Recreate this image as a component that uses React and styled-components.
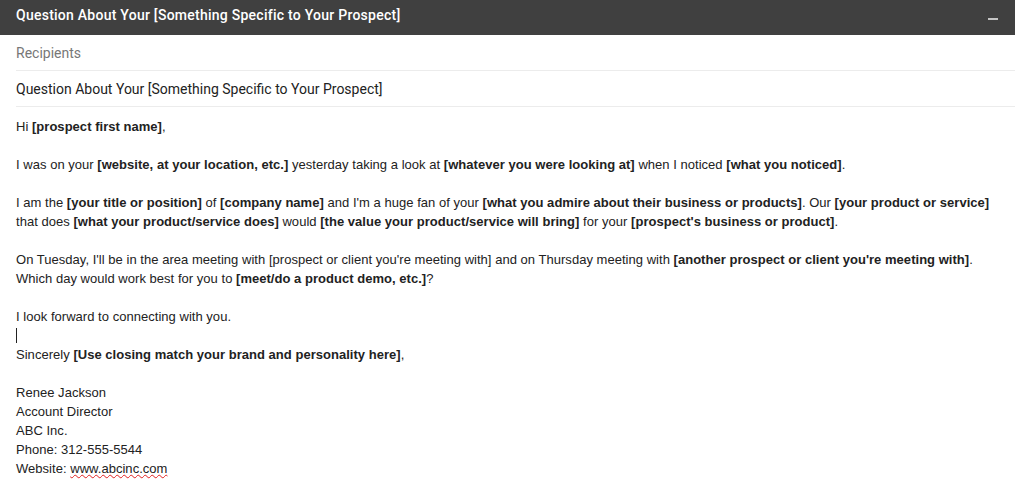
import React from 'react';
import styled, { createGlobalStyle } from 'styled-components';

const Global = createGlobalStyle`
  body {
    margin: 0;
    background: #fff;
    font-family: Roboto, "Liberation Sans", Arial, sans-serif;
  }
`;

const Window = styled.div`
  width: 1015px;
  height: 485px;
  overflow: hidden;
  display: flex;
  flex-direction: column;
`;

const TitleBar = styled.div`
  height: 35px;
  background: #404040;
  display: flex;
  align-items: center;
  justify-content: space-between;
  padding: 0 12px 0 16px;
  box-sizing: border-box;
  flex-shrink: 0;
`;

const Title = styled.div`
  color: #fff;
  font-size: 14px;
  font-weight: 500;
  letter-spacing: 0.25px;
  margin-top: -5px;
`;

const Minimize = styled.button`
  border: 0;
  padding: 0;
  background: transparent;
  width: 20px;
  height: 20px;
  display: flex;
  align-items: center;
  justify-content: center;
  margin-top: 3px;
  cursor: pointer;

  &::before {
    content: '';
    width: 10px;
    height: 2px;
    background: #c4c4c4;
  }
`;

const Field = styled.div`
  margin-left: 16px;
  height: 36px;
  border-bottom: 1px solid #ececec;
  display: flex;
  align-items: center;
  font-size: 14px;
  color: ${p => (p.$muted ? '#777' : '#222')};
  box-sizing: border-box;
  flex-shrink: 0;
`;

const Body = styled.div`
  padding: 10px 16px 0 16px;
  font-family: "Liberation Sans", Arial, sans-serif;
  font-size: 13px;
  line-height: 19px;
  letter-spacing: 0.03px;
  color: #222;

  b {
    font-weight: 700;
  }
`;

const Para = styled.p`
  margin: 0 0 19px 0;
`;

const Line = styled.div`
  min-height: 19px;
`;

const Caret = styled.span`
  display: inline-block;
  width: 1px;
  height: 15px;
  background: #222;
  vertical-align: -3px;
`;

const Misspelled = styled.span`
  text-decoration: underline wavy #e02020;
  text-decoration-thickness: 1px;
  text-underline-offset: 1px;
`;

export default function App() {
  return (
    <Window>
      <Global />
      <TitleBar>
        <Title>Question About Your [Something Specific to Your Prospect]</Title>
        <Minimize aria-label="Minimize" />
      </TitleBar>
      <Field $muted>Recipients</Field>
      <Field>Question About Your [Something Specific to Your Prospect]</Field>
      <Body>
        <Para>Hi <b>[prospect first name]</b>,</Para>
        <Para>
          I was on your <b>[website, at your location, etc.]</b> yesterday taking a look at{' '}
          <b>[whatever you were looking at]</b> when I noticed <b>[what you noticed]</b>.
        </Para>
        <Para>
          I am the <b>[your title or position]</b> of <b>[company name]</b> and I'm a huge fan of your{' '}
          <b>[what you admire about their business or products]</b>. Our <b>[your product or service]</b>
          <br />
          that does <b>[what your product/service does]</b> would{' '}
          <b>[the value your product/service will bring]</b> for your{' '}
          <b>[prospect's business or product]</b>.
        </Para>
        <Para>
          On Tuesday, I'll be in the area meeting with [prospect or client you're meeting with] and on
          Thursday meeting with <b>[another prospect or client you're meeting with]</b>.
          <br />
          Which day would work best for you to <b>[meet/do a product demo, etc.]</b>?
        </Para>
        <Line>I look forward to connecting with you.</Line>
        <Line><Caret /></Line>
        <Para>Sincerely <b>[Use closing match your brand and personality here]</b>,</Para>
        <Line>Renee Jackson</Line>
        <Line>Account Director</Line>
        <Line>ABC Inc.</Line>
        <Line>Phone: 312-555-5544</Line>
        <Line>Website: <Misspelled>www.abcinc.com</Misspelled></Line>
      </Body>
    </Window>
  );
}
